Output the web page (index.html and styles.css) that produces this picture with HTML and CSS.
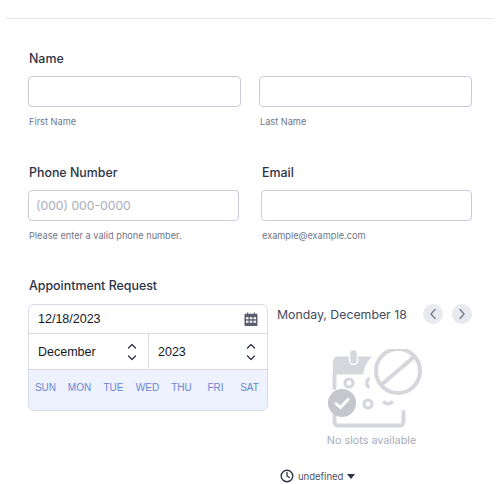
FILE: index.html
```html
<!DOCTYPE html>
<html lang="en">
<head>
<meta charset="utf-8">
<title>Appointment form</title>
<link rel="stylesheet" href="styles.css">
</head>
<body>
<div class="rule"></div>
<form class="form">
  <section class="section name-section">
    <div class="label">Name</div>
    <div class="pair pair-name">
      <div class="field"><input class="input" type="text"><div class="hint">First Name</div></div>
      <div class="field"><input class="input" type="text"><div class="hint">Last Name</div></div>
    </div>
  </section>
  <section class="section contact-section">
    <div class="contact-col">
      <div class="label">Phone Number</div>
      <input class="input" type="text" placeholder="(000) 000-0000">
      <div class="hint">Please enter a valid phone number.</div>
    </div>
    <div class="contact-col">
      <div class="label">Email</div>
      <input class="input" type="text">
      <div class="hint">example@example.com</div>
    </div>
  </section>
  <section class="section appt-section">
    <div class="label">Appointment Request</div>
    <div class="appt">
      <div class="calendar">
        <div class="date-row">
          <span>12/18/2023</span>
          <svg class="cal-icon" viewBox="0 0 14 14" width="14" height="14"><path fill="#5b5f70" d="M3 0.5h1.2v1.2h5.6V0.5H11v1.2h1.5c.6 0 1 .4 1 1V13c0 .6-.4 1-1 1h-11c-.6 0-1-.4-1-1V2.700c0-.6.4-1 1-1H3z"/><g fill="#fff"><rect x="2" y="5.200" width="2.500" height="2"/><rect x="5.800" y="5.200" width="2.500" height="2"/><rect x="9.500" y="5.200" width="2.500" height="2"/><rect x="2" y="8.700" width="2.500" height="2"/><rect x="5.800" y="8.700" width="2.500" height="2"/><rect x="9.500" y="8.700" width="2.500" height="2"/></g></svg>
        </div>
        <div class="select-row">
          <div class="select month"><span>December</span>
            <svg class="updown" viewBox="0 0 12 20" width="12" height="20"><path d="M2.500 6 6 2.500 9.500 6M2.500 14 6 17.500 9.500 14" fill="none" stroke="#2c3345" stroke-width="1.300" stroke-linecap="round" stroke-linejoin="round"/></svg>
          </div>
          <div class="select year"><span>2023</span>
            <svg class="updown" viewBox="0 0 12 20" width="12" height="20"><path d="M2.500 6 6 2.500 9.500 6M2.500 14 6 17.500 9.500 14" fill="none" stroke="#2c3345" stroke-width="1.300" stroke-linecap="round" stroke-linejoin="round"/></svg>
          </div>
        </div>
        <div class="days">
          <span>SUN</span><span>MON</span><span>TUE</span><span>WED</span><span>THU</span><span>FRI</span><span>SAT</span>
        </div>
      </div>
      <div class="slots">
        <div class="slots-head">
          <span class="slots-date">Monday, December 18</span>
          <div class="nav">
            <button class="nav-btn" type="button"><svg viewBox="0 0 8 12" width="8" height="12"><path d="M6 1.500 2 6l4 4.500" fill="none" stroke="#7d8196" stroke-width="1.500" stroke-linecap="round" stroke-linejoin="round"/></svg></button>
            <button class="nav-btn" type="button"><svg viewBox="0 0 8 12" width="8" height="12"><path d="M2 1.500 6 6l-4 4.500" fill="none" stroke="#7d8196" stroke-width="1.500" stroke-linecap="round" stroke-linejoin="round"/></svg></button>
          </div>
        </div>
        <div class="empty">
          <svg class="empty-icon" viewBox="0 0 96 80" width="96" height="80">
            <path fill="#d6d7dd" d="M7 12c0-2.500 2-4.500 4.500-4.500H46c-4 4-7.500 10-9 18H7z"/>
            <rect x="23.500" y="0.500" width="8" height="15" rx="4" fill="#d6d7dd" stroke="#fff" stroke-width="1.500"/>
            <circle cx="72" cy="22" r="22" fill="none" stroke="#d6d7dd" stroke-width="4"/>
            <path d="M54 37 89 7" stroke="#d6d7dd" stroke-width="4"/>
            <path d="M8.500 25v14M8.500 66v7c0 2 1.500 3.500 3.500 3.500h62c2 0 3.500-1.500 3.500-3.500V63" fill="none" stroke="#d6d7dd" stroke-width="4" stroke-linecap="round"/>
            <circle cx="23" cy="34" r="4" fill="none" stroke="#d6d7dd" stroke-width="3.200"/>
            <path d="M43.500 29.500a5 5 0 0 0 0 9" fill="none" stroke="#d6d7dd" stroke-width="3.200"/>
            <circle cx="42" cy="55" r="4" fill="none" stroke="#d6d7dd" stroke-width="3.200"/>
            <path d="M57.500 52a5 5 0 0 0 9 0" fill="none" stroke="#d6d7dd" stroke-width="3.200"/>
            <circle cx="16" cy="54" r="14" fill="#c6c7cd"/>
            <path d="M10 54.500l4.500 4L22 50.500" fill="none" stroke="#fff" stroke-width="3" stroke-linecap="round" stroke-linejoin="round"/>
          </svg>
          <div class="empty-text">No slots available</div>
        </div>
        <div class="tz">
          <svg viewBox="0 0 14 14" width="14" height="14"><circle cx="7" cy="7" r="5.800" fill="none" stroke="#2c3345" stroke-width="1.400"/><path d="M7 3.500V7l2.500 1.500" fill="none" stroke="#2c3345" stroke-width="1.300" stroke-linecap="round"/></svg>
          <span class="tz-text">undefined</span>
          <span class="tz-caret"></span>
        </div>
      </div>
    </div>
  </section>
</form>
</body>
</html>
```
FILE: styles.css
```css
* { box-sizing: border-box; }
html, body { margin: 0; padding: 0; background: #fff; }
body {
  width: 500px;
  height: 484px;
  overflow: hidden;
  font-family: Inter, "Liberation Sans", sans-serif;
  color: #2c3345;
  padding-top: 18px;
}
.rule { height: 1px; margin: 0 6px; background: #e6e7ed; }
.form { padding: 0 28px; }
.section { display: block; }
.name-section { padding-top: 30px; }
.contact-section { display: flex; justify-content: space-between; padding-top: 35px; }
.appt-section { padding-top: 34px; }
.label {
  height: 18px;
  line-height: 20px;
  font-size: 12.400px;
  font-weight: 450;
  padding-left: 1px;
  margin-bottom: 9px;
}
.pair { display: grid; grid-template-columns: 213px 213px; column-gap: 18px; }
.contact-col { display: flex; flex-direction: column; width: 211px; }
.input {
  display: block;
  width: 100%;
  height: 31px;
  border: 1px solid #c8cbdc;
  border-radius: 4px;
  background: #fff;
  padding: 0 7px;
  font: 12.200px Inter, sans-serif;
  outline: none;
}
.input::placeholder { color: #a9adbb; opacity: 1; }
.hint {
  font-size: 9.200px;
  line-height: 12px;
  color: #6f7588;
  margin-top: 9px;
  padding-left: 1px;
}
.appt { display: flex; padding-top: 1px; }
.calendar {
  width: 240px;
  height: 107px;
  border: 1px solid #d9dbe6;
  border-radius: 6px;
  overflow: hidden;
  font-family: "Liberation Sans", sans-serif;
  color: #141824;
  font-size: 12.500px;
  flex: none;
}
.date-row {
  height: 29px;
  display: flex;
  align-items: center;
  justify-content: space-between;
  padding: 0 9px 0 9px;
  border-bottom: 1px solid #d9dbe6;
}
.select-row { height: 36px; display: flex; border-bottom: 1px solid #d9dbe6; }
.select {
  display: flex;
  align-items: center;
  justify-content: space-between;
  padding: 0 10px 0 9px;
}
.month { width: 120px; border-right: 1px solid #d9dbe6; }
.year { flex: 1; }
.days {
  height: 40px;
  background: #eef2fe;
  display: flex;
  padding: 5px 1px 0 0;
  justify-content: space-between;
  color: #6a86d2;
  font-size: 10px;
  line-height: 25px;
}
.days span { width: 33px; text-align: center; }
.slots { flex: 1; padding: 0 0 0 9px; min-width: 0; }
.slots-head { display: flex; justify-content: space-between; align-items: center; height: 20px; }
.slots-date { font-size: 12.300px; color: #444a5e; }
.nav { display: flex; gap: 9px; }
.nav-btn {
  width: 20px;
  height: 20px;
  border: 0;
  border-radius: 50%;
  background: #e9eaf0;
  padding: 0;
  display: flex;
  align-items: center;
  justify-content: center;
}
.empty { display: flex; flex-direction: column; align-items: center; padding: 25px 6px 0 0; }
.empty-icon { display: block; margin-left: 5px; }
.empty-text { font-size: 10.800px; color: #a9adbb; line-height: 14px; margin-top: 5px; }
.tz { display: flex; align-items: center; gap: 4px; margin-top: 21px; padding-left: 3px; }
.tz-text { font-size: 9.500px; color: #4a5065; }
.tz-caret {
  width: 0;
  height: 0;
  border-left: 4px solid transparent;
  border-right: 4px solid transparent;
  border-top: 5px solid #2c3345;
}
```
